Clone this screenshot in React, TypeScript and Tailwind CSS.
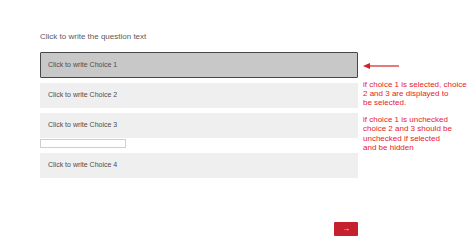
export default function App() {
  const choices = ['Click to write Choice 2', 'Click to write Choice 3'];

  return (
    <div className="w-[474px] h-[239px] bg-white flex font-['Liberation_Sans',Arial,sans-serif]">
      {/* question column */}
      <div className="ml-[40px] pt-[32px] w-[318px] flex flex-col">
        <div className="text-[8px] leading-[10px] h-[10px] text-[#5a5a5a]">Click to write the question text</div>

        <div className="mt-[10px] h-[26px] bg-[#c8c8c8] border-[1.5px] border-[#474747] rounded-[1px] flex items-center pl-[7px] text-[7px] text-[#4e4e4e]">
          Click to write Choice 1
        </div>

        {choices.map((c) => (
          <div key={c} className="mt-[5px] h-[25px] bg-[#efefef] flex items-center pl-[8px] text-[7px] text-[#4e4e4e]">
            {c}
          </div>
        ))}

        <div className="mt-[1px] h-[9px] w-[86px] border border-[#cfcfcf] bg-white"></div>

        <div className="mt-[5px] h-[25px] bg-[#efefef] flex items-center pl-[8px] text-[7px] text-[#4e4e4e]">
          Click to write Choice 4
        </div>

        <div className="mt-[44px] flex justify-end">
          <div className="w-[24px] h-[14px] bg-[#c4202e] rounded-[1px] flex items-center justify-center text-white text-[8px] leading-none">
            →
          </div>
        </div>
      </div>

      {/* annotations */}
      <div className="ml-[5px] pt-[62px] flex flex-col">
        <svg width="36" height="8" viewBox="0 0 36 8">
          <line x1="4" y1="4" x2="36" y2="4" stroke="#d42027" strokeWidth="1.2" />
          <polygon points="0,4 7,1 7,7" fill="#d42027" />
        </svg>
        <div className="mt-[10px] text-[8px] leading-[9px] text-[#e8202b]">
          if choice 1 is selected, choice<br />
          2 and 3 are displayed to<br />
          be selected.
        </div>
        <div className="mt-[8px] text-[8px] leading-[9.3px] text-[#e8202b]">
          if choice 1 is unchecked<br />
          choice 2 and 3 should be<br />
          unchecked if selected<br />
          and be hidden
        </div>
      </div>
    </div>
  );
}
